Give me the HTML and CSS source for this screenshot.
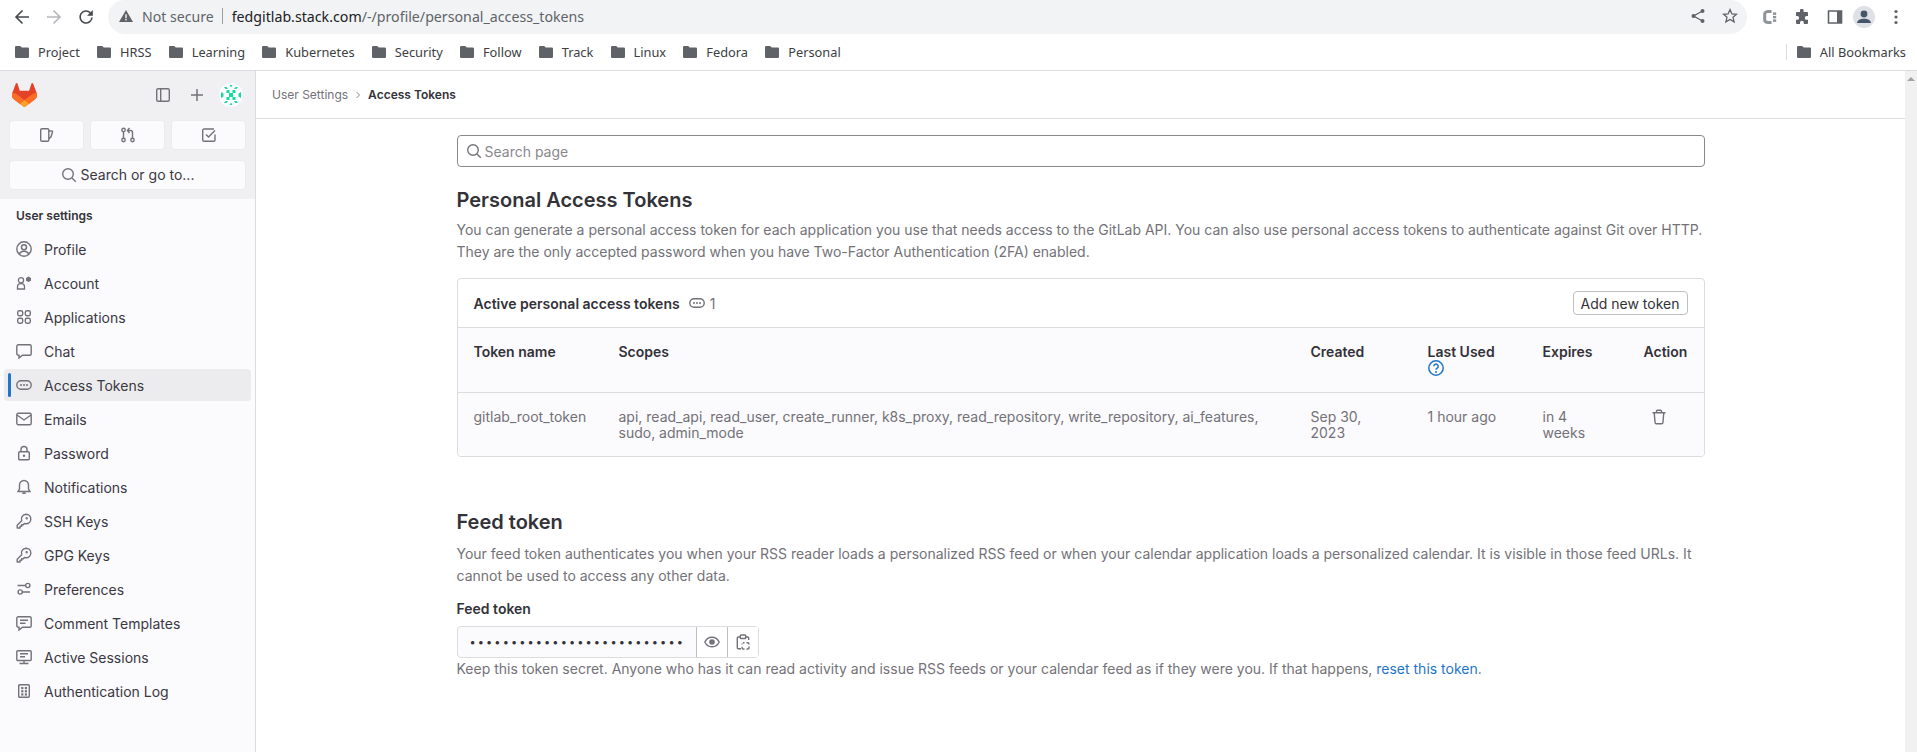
FILE: index.html
```html
<!DOCTYPE html>
<html lang="en">
<head>
<meta charset="utf-8">
<title>Personal Access Tokens</title>
<link rel="stylesheet" href="styles.css">
</head>
<body>
<svg class="defs" width="0" height="0" aria-hidden="true">
  <defs>
    <symbol id="folder" viewBox="0 0 14 12"><path d="M1.2 0h4l1.6 1.6h6A1.2 1.2 0 0 1 14 2.8v8A1.2 1.2 0 0 1 12.800 12H1.200A1.200 1.200 0 0 1 0 10.800V1.200A1.200 1.200 0 0 1 1.200 0Z" fill="#5f6368"/></symbol>
    <symbol id="key" viewBox="0 0 16 16"><g fill="none" stroke="currentColor" stroke-width="1.400" stroke-linejoin="round"><path d="M10 1.200a4.800 4.800 0 0 1 0 9.600c-.6 0-1.100-.1-1.600-.3L7.300 11.700H5.700v1.600H4.100v1.700H1.200v-2.800l4.500-4.500A4.800 4.800 0 0 1 10 1.200Z"/><circle cx="10.700" cy="5.200" r=".5"/></g></symbol>
    <symbol id="token" viewBox="0 0 16 16"><rect x=".8" y="3.800" width="14.400" height="8.400" rx="4.200" fill="none" stroke="currentColor" stroke-width="1.400"/><circle cx="5" cy="8" r="1" fill="currentColor"/><circle cx="8" cy="8" r="1" fill="currentColor"/><circle cx="11" cy="8" r="1" fill="currentColor"/></symbol>
  </defs>
</svg>

<header class="browser">
  <div class="toolbar">
    <div class="nav-btns">
      <svg class="ch-icon" viewBox="0 0 16 16"><path d="M15 8H2.500M8.500 1.500 2 8l6.500 6.500" fill="none" stroke="#45484c" stroke-width="1.600"/></svg>
      <svg class="ch-icon" viewBox="0 0 16 16"><path d="M1 8h12.500M7.500 1.500 14 8l-6.500 6.500" fill="none" stroke="#b4b6b9" stroke-width="1.600"/></svg>
      <svg class="ch-icon" viewBox="0 0 16 16"><path d="M14 8.500A6 6 0 1 1 12.300 3.800" fill="none" stroke="#45484c" stroke-width="1.600"/><path d="M14.800 1v5.700H9z" fill="#45484c"/></svg>
    </div>
    <div class="omnibox">
      <svg class="warn" viewBox="0 0 14 12"><path d="M7 0 14 12H0Z" fill="#5f6368"/><path d="M6.300 4.200h1.400v4H6.300zM6.300 9h1.400v1.400H6.300z" fill="#f1f3f4"/></svg>
      <span class="not-secure">Not secure</span>
      <span class="omni-sep"></span>
      <span class="url"><span class="url-host">fedgitlab.stack.com</span>/-/profile/personal_access_tokens</span>
      <span class="omni-right">
        <svg class="ch-small" viewBox="0 0 16 16"><path d="M12.500 3 3.500 8l9 5" fill="none" stroke="#5f6368" stroke-width="1.300"/><circle cx="12.500" cy="3" r="2" fill="#5f6368"/><circle cx="3.500" cy="8" r="2" fill="#5f6368"/><circle cx="12.500" cy="13" r="2" fill="#5f6368"/></svg>
        <svg class="ch-small" viewBox="0 0 16 16"><path d="m8 1.600 1.900 4.300 4.600.4-3.500 3 1.100 4.600L8 11.500l-4.100 2.400L5 9.300l-3.500-3 4.600-.4Z" fill="none" stroke="#5f6368" stroke-width="1.300"/></svg>
      </span>
    </div>
    <div class="ext-btns">
      <svg class="ext" viewBox="0 0 16 16"><path d="M10.500 2.600H7.500Q3.700 2.600 3.700 5v6q0 2.400 3.800 2.400h3" fill="none" stroke="#8f9499" stroke-width="3"/><g fill="#8f9499"><rect x="12" y="3.400" width="3.200" height="2.500"/><rect x="12" y="6.900" width="3.200" height="2.500"/><rect x="12" y="10.400" width="3.200" height="2.500"/></g></svg>
      <svg class="ext" viewBox="0 0 16 16"><path d="M6 1.500a1.800 1.800 0 0 1 3.600 0V3H13a1 1 0 0 1 1 1v3h-1.300a1.900 1.900 0 0 0 0 3.800H14V14a1 1 0 0 1-1 1H9.800v-1.300a1.900 1.900 0 0 0-3.800 0V15H3a1 1 0 0 1-1-1v-3.200h1.200a1.900 1.900 0 0 0 0-3.800H2V4a1 1 0 0 1 1-1h3Z" fill="#5f6368"/></svg>
      <svg class="ext" viewBox="0 0 16 16"><path d="M1.500 2h13v12h-13Z" fill="#fff" stroke="#5f6368" stroke-width="1.600"/><rect x="10" y="2" width="4.500" height="12" fill="#5f6368"/></svg>
      <span class="profile"><svg viewBox="0 0 22 22" width="22" height="22"><circle cx="11" cy="8" r="3.400" fill="#45566a"/><path d="M4 17c.4-3 3.500-4.300 7-4.300s6.600 1.300 7 4.300Z" fill="#45566a"/></svg></span>
      <svg class="ext" viewBox="0 0 16 16"><circle cx="8" cy="2.500" r="1.600" fill="#5f6368"/><circle cx="8" cy="8" r="1.600" fill="#5f6368"/><circle cx="8" cy="13.500" r="1.600" fill="#5f6368"/></svg>
    </div>
  </div>
  <div class="bookmarks">
    <div class="bm-list">
      <a class="bm"><svg class="folder"><use href="#folder"/></svg>Project</a>
      <a class="bm"><svg class="folder"><use href="#folder"/></svg>HRSS</a>
      <a class="bm"><svg class="folder"><use href="#folder"/></svg>Learning</a>
      <a class="bm"><svg class="folder"><use href="#folder"/></svg>Kubernetes</a>
      <a class="bm"><svg class="folder"><use href="#folder"/></svg>Security</a>
      <a class="bm"><svg class="folder"><use href="#folder"/></svg>Follow</a>
      <a class="bm"><svg class="folder"><use href="#folder"/></svg>Track</a>
      <a class="bm"><svg class="folder"><use href="#folder"/></svg>Linux</a>
      <a class="bm"><svg class="folder"><use href="#folder"/></svg>Fedora</a>
      <a class="bm"><svg class="folder"><use href="#folder"/></svg>Personal</a>
    </div>
    <div class="bm-all"><a class="bm"><svg class="folder"><use href="#folder"/></svg>All Bookmarks</a></div>
  </div>
</header>

<div class="app">
  <aside class="sidebar">
    <div class="side-top">
      <div class="side-head">
        <svg class="tanuki" viewBox="0 0 25 24"><path d="m24.507 9.500-.034-.090L21.082.562a.896.896 0 0 0-1.694.091l-2.290 7.010H7.825L5.535.653a.898.898 0 0 0-1.694-.090L.451 9.411.416 9.500a6.297 6.297 0 0 0 2.090 7.278l.012.010.030.022 5.160 3.867 2.560 1.935 1.554 1.176a1.051 1.051 0 0 0 1.268 0l1.555-1.176 2.560-1.935 5.197-3.890.014-.010A6.297 6.297 0 0 0 24.507 9.500Z" fill="#E24329"/><path d="m24.507 9.500-.034-.090a11.440 11.440 0 0 0-4.560 2.051l-7.447 5.632 4.742 3.584 5.197-3.890.014-.010A6.297 6.297 0 0 0 24.507 9.500Z" fill="#FC6D26"/><path d="m7.707 20.677 2.560 1.935 1.555 1.176a1.051 1.051 0 0 0 1.268 0l1.555-1.176 2.560-1.935-4.743-3.584-4.755 3.584Z" fill="#FCA326"/><path d="M5.010 11.461a11.430 11.430 0 0 0-4.560-2.050L.416 9.500a6.297 6.297 0 0 0 2.090 7.278l.012.010.030.022 5.160 3.867 4.745-3.584-7.444-5.632Z" fill="#FC6D26"/></svg>
        <span class="side-actions">
          <svg class="ic" viewBox="0 0 16 16"><rect x="1.700" y="1.700" width="12.600" height="12.600" rx="1.500" fill="none" stroke="currentColor" stroke-width="1.400"/><path d="M5.700 2v12" stroke="currentColor" stroke-width="1.400"/></svg>
          <svg class="ic" viewBox="0 0 16 16"><path d="M8 2v12M2 8h12" stroke="currentColor" stroke-width="1.500"/></svg>
          <svg class="avatar" viewBox="0 0 24 24"><circle cx="12" cy="12" r="12" fill="#fff"/><g fill="#12dca0"><path d="M7.500 7h3v3h-3zM13.500 7h3v3h-3zM7.500 14h3v3h-3zM13.500 14h3v3h-3zM10 10h4v4h-4z"/><path d="M10.500 2h3l-1.500 2.500zM5 4h2.500L9 6H6.500zM19 4h-2.500L15 6h2.500zM5 20h2.500L9 18H6.500zM19 20h-2.500L15 18h2.500zM2 9l2.500 1.500v3L2 15zM22 9l-2.500 1.500v3L22 15zM10.500 22h3L12 19.500z"/></g></svg>
        </span>
      </div>
      <div class="side-btns">
        <a class="side-btn"><svg class="ic" viewBox="0 0 16 16"><path d="M3 1.700h5.500a1.300 1.300 0 0 1 1.300 1.300v10a1.300 1.300 0 0 1-1.300 1.300H3A1.300 1.300 0 0 1 1.700 13V3A1.300 1.300 0 0 1 3 1.700ZM9.800 4h2.900a.8.800 0 0 1 .8 1l-1.500 4.800-2.200 2.200" fill="none" stroke="currentColor" stroke-width="1.400"/></svg></a>
        <a class="side-btn"><svg class="ic" viewBox="0 0 16 16"><g fill="none" stroke="currentColor" stroke-width="1.400"><circle cx="3.500" cy="3" r="1.700"/><circle cx="3.500" cy="13" r="1.700"/><circle cx="12.500" cy="13" r="1.700"/><path d="M3.500 4.700v6.600M12.500 11.300V5.500a2 2 0 0 0-2-2H8"/><path d="M9.500 1 7.500 3.500l2 2.500"/></g></svg></a>
        <a class="side-btn"><svg class="ic" viewBox="0 0 16 16"><path d="M14 7.500V13a1.300 1.300 0 0 1-1.300 1.300H3A1.300 1.300 0 0 1 1.700 13V3.300A1.300 1.300 0 0 1 3 2h10" fill="none" stroke="currentColor" stroke-width="1.400"/><path d="m5 7.500 2.500 2.500 6.500-6.500" fill="none" stroke="currentColor" stroke-width="1.400"/></svg></a>
      </div>
      <a class="side-search"><svg class="ic" viewBox="0 0 16 16"><circle cx="7" cy="7" r="5.300" fill="none" stroke="currentColor" stroke-width="1.400"/><path d="m11 11 3.800 3.800" stroke="currentColor" stroke-width="1.400"/></svg>Search or go to...</a>
    </div>
    <nav class="side-nav">
      <div class="side-title">User settings</div>
      <a class="nav-item"><svg class="ic" viewBox="0 0 16 16"><g fill="none" stroke="currentColor" stroke-width="1.400"><circle cx="8" cy="8" r="7.200"/><circle cx="8" cy="6.300" r="2.500"/><path d="M3.300 13.300c.6-2 2.500-3 4.700-3s4.100 1 4.700 3"/></g></svg>Profile</a>
      <a class="nav-item"><svg class="ic" viewBox="0 0 16 16"><g fill="none" stroke="currentColor" stroke-width="1.300"><circle cx="5" cy="5.200" r="2.600"/><path d="M1.500 14v-2.300a3 3 0 0 1 3-3h1a3 3 0 0 1 3 3V14Z"/></g><path d="m12.500 1.500 2.500 1.400v2.800l-2.500 1.400-2.500-1.400V2.900Z" fill="currentColor"/></svg>Account</a>
      <a class="nav-item"><svg class="ic" viewBox="0 0 16 16"><g fill="none" stroke="currentColor" stroke-width="1.400"><rect x="1.700" y="1.700" width="5" height="5" rx="1.700"/><rect x="9.300" y="1.700" width="5" height="5" rx="1.700"/><rect x="1.700" y="9.300" width="5" height="5" rx="1.700"/><rect x="9.300" y="9.300" width="5" height="5" rx="1.700"/></g></svg>Applications</a>
      <a class="nav-item"><svg class="ic" viewBox="0 0 16 16"><path d="M2.300 1.800h11.400A1.500 1.500 0 0 1 15.200 3.300v7.400a1.500 1.500 0 0 1-1.500 1.500H6.500l-3.500 2.800v-2.800h-.7A1.500 1.500 0 0 1 .8 10.700V3.300a1.500 1.500 0 0 1 1.500-1.500Z" fill="none" stroke="currentColor" stroke-width="1.400"/></svg>Chat</a>
      <a class="nav-item active"><svg class="ic"><use href="#token"/></svg>Access Tokens</a>
      <a class="nav-item"><svg class="ic" viewBox="0 0 16 16"><rect x=".8" y="2.300" width="14.400" height="11.400" rx="1.500" fill="none" stroke="currentColor" stroke-width="1.400"/><path d="m1 4 7 5 7-5" fill="none" stroke="currentColor" stroke-width="1.400"/></svg>Emails</a>
      <a class="nav-item"><svg class="ic" viewBox="0 0 16 16"><rect x="2.700" y="6.700" width="10.600" height="8" rx="1" fill="none" stroke="currentColor" stroke-width="1.400"/><path d="M5 6.500V4.500a3 3 0 0 1 6 0v2" fill="none" stroke="currentColor" stroke-width="1.400"/><circle cx="8" cy="10.700" r="1.200" fill="currentColor"/></svg>Password</a>
      <a class="nav-item"><svg class="ic" viewBox="0 0 16 16"><path d="M8 1.500a4.500 4.500 0 0 1 4.500 4.500v4l1.500 2.500H2L3.500 10V6A4.500 4.500 0 0 1 8 1.500ZM6.300 14.300h3.400" fill="none" stroke="currentColor" stroke-width="1.400"/></svg>Notifications</a>
      <a class="nav-item"><svg class="ic"><use href="#key"/></svg>SSH Keys</a>
      <a class="nav-item"><svg class="ic"><use href="#key"/></svg>GPG Keys</a>
      <a class="nav-item"><svg class="ic" viewBox="0 0 16 16"><g fill="none" stroke="currentColor" stroke-width="1.400"><circle cx="11.800" cy="4.500" r="2.100"/><circle cx="4.200" cy="11" r="2.100"/><path d="M1.500 4.500h8M14 11H6.500"/></g></svg>Preferences</a>
      <a class="nav-item"><svg class="ic" viewBox="0 0 16 16"><path d="M2.300 1.800h11.400A1.500 1.500 0 0 1 15.200 3.300v7.400a1.500 1.500 0 0 1-1.500 1.500H6.500l-3.500 2.800v-2.800h-.7A1.500 1.500 0 0 1 .8 10.700V3.300a1.500 1.500 0 0 1 1.500-1.500Z" fill="none" stroke="currentColor" stroke-width="1.400"/><path d="M4 5.300h8M4 8.300h5.500" stroke="currentColor" stroke-width="1.400"/></svg>Comment Templates</a>
      <a class="nav-item"><svg class="ic" viewBox="0 0 16 16"><rect x=".8" y="1.700" width="14.400" height="9.800" rx="1" fill="none" stroke="currentColor" stroke-width="1.400"/><path d="M4 4.700h8M4 7.700h5M8 11.500v2.800M3.500 14.500h9" stroke="currentColor" stroke-width="1.400"/></svg>Active Sessions</a>
      <a class="nav-item"><svg class="ic" viewBox="0 0 16 16"><rect x="2.700" y="1.700" width="10.600" height="12.600" rx="1" fill="none" stroke="currentColor" stroke-width="1.400"/><g fill="currentColor"><rect x="5.200" y="4" width="2.200" height="2.200"/><rect x="8.800" y="4" width="2.200" height="2.200"/><rect x="5.200" y="7.200" width="2.200" height="2.200"/><rect x="8.800" y="7.200" width="2.200" height="2.200"/><rect x="5.200" y="10.400" width="2.200" height="2.200"/><rect x="8.800" y="10.400" width="2.200" height="2.200"/></g></svg>Authentication Log</a>
    </nav>
  </aside>

  <div class="main">
    <div class="crumbs"><a class="crumb">User Settings</a><svg class="crumb-sep" viewBox="0 0 8 8"><path d="m2.500 1 3 3-3 3" fill="none" stroke="#89888d" stroke-width="1"/></svg><strong class="crumb-current">Access Tokens</strong></div>
    <main class="content">
      <div class="search-page"><svg class="ic" viewBox="0 0 16 16"><circle cx="7" cy="7" r="5.300" fill="none" stroke="currentColor" stroke-width="1.400"/><path d="m11 11 3.800 3.800" stroke="currentColor" stroke-width="1.400"/></svg><span>Search page</span></div>

      <section class="pat">
        <h1 class="h">Personal Access Tokens</h1>
        <p class="desc">You can generate a personal access token for each application you use that needs access to the GitLab API. You can also use personal access tokens to authenticate against Git over HTTP. They are the only accepted password when you have Two-Factor Authentication (2FA) enabled.</p>
        <div class="card">
          <div class="card-head">
            <strong class="card-title">Active personal access tokens</strong>
            <svg class="ic count-ic"><use href="#token"/></svg><span class="count">1</span>
            <button class="btn">Add new token</button>
          </div>
          <table class="tokens">
            <colgroup><col class="c1"><col class="c2"><col class="c3"><col class="c4"><col class="c5"><col class="c6"></colgroup>
            <thead>
              <tr><th>Token name</th><th>Scopes</th><th>Created</th><th>Last Used<br><svg class="help" viewBox="0 0 16 16"><circle cx="8" cy="8" r="7.200" fill="none" stroke="#1f75cb" stroke-width="1.500"/><path d="M5.800 6.200a2.200 2.200 0 1 1 3.400 1.900c-.8.500-1.200.9-1.200 1.700" fill="none" stroke="#1f75cb" stroke-width="1.500"/><circle cx="8" cy="11.900" r="1" fill="#1f75cb"/></svg></th><th>Expires</th><th>Action</th></tr>
            </thead>
            <tbody>
              <tr><td>gitlab_root_token</td><td>api, read_api, read_user, create_runner, k8s_proxy, read_repository, write_repository, ai_features, sudo, admin_mode</td><td>Sep 30, 2023</td><td>1 hour ago</td><td>in 4 weeks</td><td><svg class="ic trash" viewBox="0 0 16 16"><path d="M1.500 3.700h13M5.500 3.500V2.300a1 1 0 0 1 1-1h3a1 1 0 0 1 1 1v1.200M3.200 3.700l.9 10a1.200 1.200 0 0 0 1.200 1.100h5.400a1.200 1.200 0 0 0 1.200-1.100l.9-10" fill="none" stroke="currentColor" stroke-width="1.400"/></svg></td></tr>
            </tbody>
          </table>
        </div>
      </section>

      <section class="feed">
        <h2 class="h">Feed token</h2>
        <p class="desc">Your feed token authenticates you when your RSS reader loads a personalized RSS feed or when your calendar application loads a personalized calendar. It is visible in those feed URLs. It cannot be used to access any other data.</p>
        <div class="feed-label">Feed token</div>
        <div class="input-group">
          <span class="dots">••••••••••••••••••••••••••</span>
          <span class="ig-btn"><svg class="ic" viewBox="0 0 16 16"><path d="M.8 8C2.300 5 5 3.200 8 3.200S13.700 5 15.200 8C13.700 11 11 12.800 8 12.800S2.300 11 .8 8Z" fill="none" stroke="currentColor" stroke-width="1.400"/><circle cx="8" cy="8" r="2.800" fill="currentColor"/></svg></span>
          <span class="ig-btn"><svg class="ic" viewBox="0 0 16 16"><path d="M5 3H3.300a1 1 0 0 0-1 1v9.800a1 1 0 0 0 1 1H6M11 3h1.700a1 1 0 0 1 1 1v2" fill="none" stroke="currentColor" stroke-width="1.400"/><rect x="5.300" y="1" width="5.400" height="3.500" rx=".8" fill="none" stroke="currentColor" stroke-width="1.400"/><path d="M8 8.700h1.500M11.500 8.700H13a1 1 0 0 1 .9.900v1M14 12.500V14a1 1 0 0 1-1 1h-1.500M9.500 15H8a.900.900 0 0 1-.9-.9v-1.400M7.100 10.500v-1" fill="none" stroke="currentColor" stroke-width="1.400"/></svg></span>
        </div>
        <p class="hint">Keep this token secret. Anyone who has it can read activity and issue RSS feeds or your calendar feed as if they were you. If that happens, <a class="link">reset this token</a>.</p>
      </section>
    </main>
  </div>

  <div class="scrollbar"><span class="arrow-up"></span></div>
</div>
</body>
</html>
```

FILE: styles.css
```css
* { box-sizing: border-box; }
html, body { margin: 0; height: 100%; overflow: hidden; }
body {
  background: #fff;
  font-family: Inter, "Noto Sans", sans-serif;
  font-size: 14px;
  color: #333238;
  display: flex;
  flex-direction: column;
  height: 752px;
}
.defs { position: absolute; }
.ic { width: 16px; height: 16px; flex: none; color: #737278; display: block; }

/* browser chrome */
.browser { flex: none; height: 71px; border-bottom: 1px solid #dadce0; font-family: "Noto Sans", "Open Sans", sans-serif; }
.toolbar { height: 35px; display: flex; align-items: flex-start; }
.nav-btns { width: 108px; height: 34px; display: flex; align-items: center; gap: 16px; padding-left: 14px; flex: none; }
.ch-icon { width: 16px; height: 16px; }
.omnibox { width: 1639px; height: 34px; background: #f1f3f4; border-radius: 17px; display: flex; align-items: center; padding: 0 0 2px 11px; font-size: 14px; flex: none; }
.warn { width: 14px; height: 12px; flex: none; margin-right: 9px; }
.not-secure { color: #5f6368; font-size: 14.100px; }
.omni-sep { width: 1px; height: 16px; background: #9aa0a6; margin: 0 9px 0 8px; }
.url { color: #5f6368; font-size: 14.200px; }
.url-host { color: #202124; }
.omni-right { margin-left: auto; display: flex; gap: 16px; padding-right: 9px; align-items: center; }
.ch-small { width: 16px; height: 16px; display: block; }
.ext-btns { flex: 1; height: 34px; display: flex; align-items: center; padding-left: 14px; }
.ext { width: 16px; height: 16px; flex: none; margin-right: 17px; }
.ext-btns .ext:nth-child(3) { margin-right: 10px; }
.profile { width: 22px; height: 22px; border-radius: 50%; background: #dee1e6; flex: none; margin-right: 13px; display: block; }
.profile svg { display: block; }
.ext-btns .ext:last-child { margin-right: 0; }

.bookmarks { height: 35px; padding-bottom: 2px; display: flex; align-items: center; justify-content: space-between; font-size: 12.800px; color: #3c4043; }
.bm-list { display: flex; padding-left: 15px; gap: 17.200px; }
.bm { display: flex; align-items: center; gap: 9px; }
.folder { width: 14px; height: 12px; flex: none; }
.bm-all { border-left: 1px solid #dadce0; height: 16px; display: flex; align-items: center; padding-left: 10px; padding-right: 11px; }

/* app */
.app { flex: 1; min-height: 0; display: flex; }
.sidebar { width: 256px; flex: none; background: #fbfafd; border-right: 1px solid #dcdcde; display: flex; flex-direction: column; }
.side-top { background: #f0f0f2; padding: 12px 9px 9px; height: 128px; }
.side-head { display: flex; align-items: center; justify-content: space-between; height: 24px; padding-left: 3px; }
.tanuki { width: 25px; height: 24px; display: block; }
.side-actions { display: flex; align-items: center; }
.side-actions .ic:first-child { margin-right: 18px; }
.side-actions .ic:nth-child(2) { margin-right: 14px; }
.avatar { width: 24px; height: 24px; display: block; margin-right: 3px; }
.side-btns { display: grid; grid-template-columns: repeat(3, 1fr); gap: 6px; margin-top: 13px; }
.side-btn { height: 30px; background: #fbfafd; border: 1px solid #ececef; border-radius: 4px; display: flex; align-items: center; justify-content: center; }
.side-search { height: 30px; margin-top: 10px; padding-bottom: 1px; background: #fbfafd; border: 1px solid #ececef; border-radius: 4px; display: flex; align-items: center; justify-content: center; gap: 4px; color: #3a383f; }
.side-nav { padding: 2px 4px 0; display: flex; flex-direction: column; gap: 2px; }
.side-title { font-size: 12px; font-weight: 600; color: #333238; padding: 0 12px; height: 30px; line-height: 16px; display: flex; align-items: center; }
.nav-item { height: 32px; display: flex; align-items: center; gap: 12px; padding-left: 12px; width: 247px; border-radius: 4px; color: #3a383f; position: relative; }
.nav-item.active { background: #ececef; }
.nav-item.active::before { content: ""; position: absolute; left: 4px; top: 4px; width: 3px; height: 24px; background: #1f75cb; border-radius: 2px; }

.main { flex: 1; min-width: 0; display: flex; flex-direction: column; }
.crumbs { height: 48px; flex: none; border-bottom: 1px solid #dcdcde; display: flex; align-items: center; padding-left: 16px; font-size: 12px; color: #737278; }
.crumb-sep { width: 8px; height: 8px; margin: 0 6px; }
.crumb-current { color: #333238; font-weight: 600; }
.content { width: 1280px; margin: 0 auto; padding: 16px 16px 0; }
.search-page { height: 32px; border: 1px solid #89888d; border-radius: 4px; display: flex; align-items: center; gap: 3px; padding-left: 8px; color: #89888d; }
.h { font-size: 20px; font-weight: 600; color: #333238; margin: 0; line-height: 24px; }
.pat { margin-top: 21px; }
.desc { margin: 7px 0 0; color: #737278; line-height: 22px; }
.card { margin-top: 15px; border: 1px solid #dcdcde; border-radius: 4px; overflow: hidden; }
.card-head { height: 49px; display: flex; align-items: center; padding: 0 16px; border-bottom: 1px solid #dcdcde; }
.card-title { font-weight: 600; color: #333238; }
.count-ic { margin-left: 9px; margin-right: 5px; }
.count { color: #737278; }
.btn { margin-left: auto; height: 24px; width: 115px; padding: 0; font: inherit; color: #333238; background: #fff; border: 1px solid #bfbfc3; border-radius: 4px; }
.tokens { width: 100%; table-layout: fixed; border-collapse: collapse; background: #fbfafd; line-height: 16px; }
.c1 { width: 145px; } .c3 { width: 117px; } .c4 { width: 115px; } .c5 { width: 101px; } .c6 { width: 76px; }
th, td { text-align: left; vertical-align: top; padding: 16px; }
th { font-weight: 600; color: #333238; border-bottom: 1px solid #dcdcde; }
td { color: #737278; padding-bottom: 15px; }
.help { width: 16px; height: 16px; display: block; }
.trash { margin-left: 7px; }
.feed { margin-top: 53px; }
.feed .desc { margin-top: 9px; }
.feed-label { font-weight: 600; color: #333238; margin-top: 12px; line-height: 20px; }
.input-group { margin-top: 7px; width: 302px; height: 32px; border: 1px solid #dcdcde; border-radius: 4px; display: flex; align-items: center; background: #fbfafd; }
.dots { flex: 1; min-width: 0; padding-left: 12px; color: #333238; font-size: 11px; letter-spacing: 2.100px; line-height: 30px; white-space: nowrap; }
.ig-btn { width: 31px; height: 30px; border-left: 1px solid #bfbfc3; display: flex; align-items: center; justify-content: center; background: #fff; flex: none; }
.hint { margin: 1px 0 0; color: #737278; line-height: 20px; }
.link { color: #1f75cb; }

.scrollbar { width: 12px; flex: none; background: #f1f1f1; position: relative; }
.arrow-up { position: absolute; left: 2px; top: 6px; width: 0; height: 0; border-left: 4px solid transparent; border-right: 4px solid transparent; border-bottom: 4px solid #a3a3a3; }
```
